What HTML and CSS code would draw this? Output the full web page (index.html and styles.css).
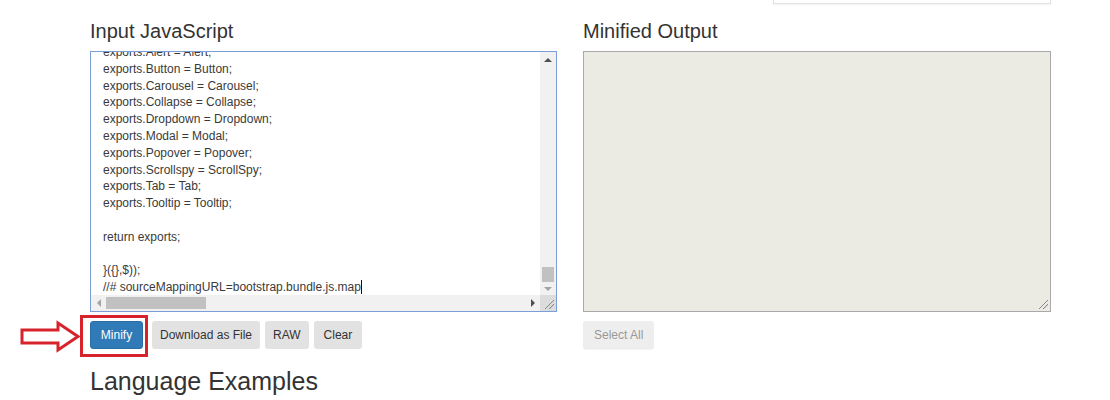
FILE: index.html
```html
<!DOCTYPE html>
<html lang="en">
<head>
  <meta charset="UTF-8">
  <title>JavaScript Minifier</title>
  <link rel="stylesheet" href="styles.css">
</head>
<body>

  <div class="page">
    <div class="topbar">
      <div class="search-box"></div>
    </div>

    <div class="columns">
      <div class="col">
        <h2>Input JavaScript</h2>
        <div class="editor focused">
          <div class="editor-text">
<pre>exports.Alert = Alert;
exports.Button = Button;
exports.Carousel = Carousel;
exports.Collapse = Collapse;
exports.Dropdown = Dropdown;
exports.Modal = Modal;
exports.Popover = Popover;
exports.Scrollspy = ScrollSpy;
exports.Tab = Tab;
exports.Tooltip = Tooltip;

return exports;

}({},$));
//# sourceMappingURL=bootstrap.bundle.js.map<span class="caret"></span></pre>
          </div>
          <div class="vscroll">
            <span class="sb-btn"><span class="tri tri-up"></span></span>
            <span class="sb-track"><span class="sb-thumb"></span></span>
            <span class="sb-btn"><span class="tri tri-down"></span></span>
          </div>
          <div class="hscroll">
            <span class="sb-btn"><span class="tri tri-left"></span></span>
            <span class="sb-track"><span class="sb-thumb"></span></span>
            <span class="sb-btn"><span class="tri tri-right"></span></span>
          </div>
          <div class="corner"><span class="grip"></span></div>
        </div>

        <div class="actions">
          <span class="marked">
            <button class="btn btn-primary">Minify</button>
            <span class="highlight"></span>
          </span>
          <button class="btn">Download as File</button>
          <button class="btn">RAW</button>
          <button class="btn btn-clear">Clear</button>
        </div>
      </div>

      <div class="col">
        <h2>Minified Output</h2>
        <div class="editor readonly">
          <div class="corner-grip"></div>
        </div>
        <div class="actions">
          <button class="btn btn-select" disabled>Select All</button>
        </div>
      </div>
    </div>

    <h2 class="section-title">Language Examples</h2>
  </div>

  <!-- flecha de la anotacion -->
  <svg class="arrow-note" width="62" height="34" viewBox="0 0 62 34">
    <path d="M2 10 H38 V3 L58 16.5 L38 30 V23 H2 Z" fill="#fff" stroke="#d8222c" stroke-width="3" stroke-linejoin="miter"/>
  </svg>

</body>
</html>
```

FILE: styles.css
```css
:root {
  --text-color: #333;
  --focus-border: #7b9ed9;
  --readonly-bg: #ebebe4;
  --btn-bg: #e2e2e2;
  --primary: #2f7ab7;
  --marker: #d8222c;
  --sb-track: #f1f1f1;
  --sb-thumb: #c1c1c1;
}

body {
  margin: 0;
  font-family: "Liberation Sans", Arial, sans-serif;
  color: var(--text-color);
  background: #fff;
}

.page {
  width: 961px;
  padding-left: 90px;
}

.topbar {
  display: flex;
  justify-content: flex-end;
  height: 4px;
}

.search-box {
  width: 276px;
  height: 3px;
  border: 1px solid #e2e2e2;
  border-top: none;
  box-shadow: 0 1px 2px rgba(0, 0, 0, 0.05);
}

.columns {
  display: flex;
  gap: 26px;
}

.col {
  display: flex;
  flex-direction: column;
}

.col:first-child {
  width: 467px;
}

.col:last-child {
  width: 468px;
}

h2 {
  font-weight: normal;
  font-size: 20px;
  line-height: 22px;
  margin: 16px 0 9px;
}

/* area de texto dibujada */
.editor {
  box-sizing: border-box;
  height: 261px;
  border: 1px solid #a9a9a9;
  position: relative;
}

.editor.focused {
  border-color: var(--focus-border);
  display: grid;
  grid-template-columns: 1fr 16px;
  grid-template-rows: 1fr 16px;
  background: #fff;
}

.editor.readonly {
  background: var(--readonly-bg);
}

.editor-text {
  overflow: hidden;
  padding-left: 12px;
}

.editor-text pre {
  margin: -8px 0 0;
  font-family: "Liberation Sans", Arial, sans-serif;
  font-size: 12px;
  line-height: 16.8px;
  color: #3a3a3a;
}

.caret {
  display: inline-block;
  width: 1px;
  height: 14px;
  background: #111;
  vertical-align: -3px;
}

.vscroll,
.hscroll {
  display: flex;
  background: var(--sb-track);
}

.vscroll {
  flex-direction: column;
}

.sb-btn {
  width: 16px;
  height: 16px;
  display: flex;
  align-items: center;
  justify-content: center;
  flex: none;
}

.vscroll .sb-btn:last-child {
  height: 13px;
}

.hscroll .sb-btn {
  width: 15px;
}

.sb-track {
  flex: 1;
  display: flex;
  padding: 1px;
}

.vscroll .sb-track {
  flex-direction: column;
  justify-content: flex-end;
  padding: 0 2px;
}

.vscroll .sb-thumb {
  height: 15px;
  background: var(--sb-thumb);
}

.hscroll .sb-track {
  padding: 2px 0;
}

.hscroll .sb-thumb {
  width: 100px;
  background: var(--sb-thumb);
}

.tri {
  width: 0;
  height: 0;
  border: 4px solid transparent;
}

.tri-up {
  border-bottom-color: #505050;
  border-top-width: 0;
}

.tri-down {
  border-top-color: #a3a3a3;
  border-bottom-width: 0;
}

.tri-left {
  border-right-color: #a3a3a3;
  border-left-width: 0;
}

.tri-right {
  border-left-color: #505050;
  border-right-width: 0;
}

.corner {
  background: #dcdcdc;
  position: relative;
}

.grip,
.corner-grip {
  position: absolute;
  right: 2px;
  bottom: 2px;
  width: 9px;
  height: 9px;
  background: linear-gradient(135deg, transparent 45%, #888 46%, #888 52%, transparent 53%, transparent 70%, #888 71%, #888 77%, transparent 78%);
}

.actions {
  display: flex;
  gap: 5px;
  margin-top: 9px;
}

.btn {
  font-family: "Liberation Sans", Arial, sans-serif;
  font-size: 12px;
  height: 28px;
  padding: 0 8px;
  border: none;
  border-radius: 3px;
  background: var(--btn-bg);
  color: #333;
  cursor: pointer;
}

.btn-clear {
  padding: 0 10px;
}

.btn-primary {
  background: var(--primary);
  border: 1px solid #2a6ea6;
  color: #fff;
  width: 53px;
  padding: 0;
}

.marked {
  position: relative;
  display: inline-flex;
  margin-right: 4px;
}

.btn:disabled {
  background: #eee;
  color: #999;
  cursor: default;
  box-shadow: 0 1px 1px rgba(0, 0, 0, 0.05);
}

.btn-select {
  padding: 0 11px;
}

.highlight {
  position: absolute;
  left: -10px;
  top: -6px;
  width: 68px;
  height: 42px;
  box-sizing: border-box;
  border: 3px solid var(--marker);
}

.section-title {
  font-size: 25px;
  line-height: 28px;
  margin: 18px 0 0;
}

.arrow-note {
  position: absolute;
  left: 20px;
  top: 320px;
}
```
